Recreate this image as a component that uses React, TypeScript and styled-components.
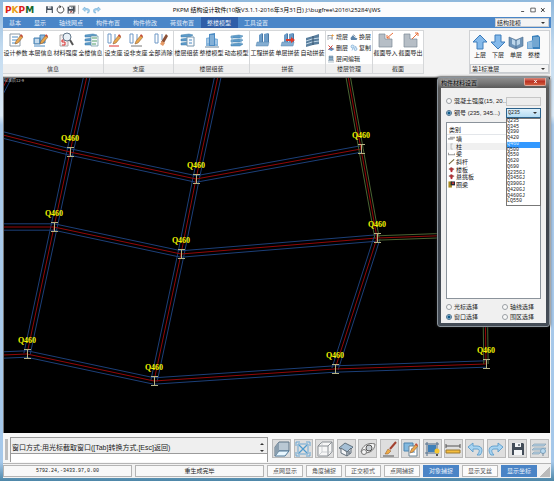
import React, { useState } from "react";
import styled, { createGlobalStyle, css } from "styled-components";

const sans = `"Liberation Sans", "Noto Sans CJK SC", sans-serif`;
const cjk = `"Noto Sans CJK SC", sans-serif`;
const mono = `"Liberation Mono", "Noto Sans CJK SC", monospace`;

const GlobalStyle = createGlobalStyle`
  * { box-sizing: border-box; }
  body { margin: 0; font: 6px/8px ${cjk}; color: #222; }
  button, input, select { font: inherit; color: inherit; margin: 0; padding: 0; }
  ul { list-style: none; margin: 0; padding: 0; }
`;

const Frame = styled.div`
  position: relative;
  display: flex;
  flex-direction: column;
  min-height: 100vh;
  padding: 2px 3px 3px;
  background: linear-gradient(180deg, #8fb8dc 0, #c3dbf0 10%, #dceaf6 24%, #a9c9ea 26%, #a5c8ea 96%, #4d87a8 100%);
`;
const Shell = styled.div`
  flex: 1;
  display: flex;
  flex-direction: column;
  background: #f3f3f3;
`;

/* Title bar */
const TitleBar = styled.header`
  display: flex;
  align-items: center;
  height: 15px;
  padding: 0 3px 0 2px;
  background: #fcfcfd;
`;
const Logo = styled.span`
  font: bold 9px/12px "DejaVu Sans", sans-serif;
  color: #dd2218;
  & > i { font-style: normal; color: #e9a21b; }
  & > b { color: #13652c; }
`;
const QuickTools = styled.div`
  display: flex;
  gap: 2px;
  margin-left: 11px;
`;
const QuickSep = styled.span`
  width: 1px;
  background: #bbb;
`;
const PlainButton = styled.button`
  display: flex;
  align-items: center;
  justify-content: center;
  border: 0;
  background: none;
`;
const QuickButton = styled(PlainButton)`
  width: 9px;
  height: 9px;
`;
const Title = styled.h1`
  flex: 1;
  margin: 0;
  padding-right: 66px;
  text-align: center;
  font: 6px/10px "Open Sans", "Noto Sans CJK SC", sans-serif;
  color: #000;
  white-space: nowrap;
`;
const WindowButton = styled(PlainButton)`
  width: 10px;
  height: 10px;
`;

/* Menu */
const MenuBar = styled.nav`
  display: flex;
  height: 11px;
  background: #4a86c8;
`;
const MenuTab = styled.button<{ $active?: boolean }>`
  padding: 0 7px 0 6px;
  border: 0;
  line-height: 11px;
  color: #e4eefa;
  background: ${(p) => (p.$active ? "#2f5ea8" : "transparent")};
`;
const SelectWrap = styled.div`
  position: relative;
  display: flex;
  &::after {
    content: "";
    position: absolute;
    right: 4px;
    top: calc(50% - 1px);
    border: 2px solid transparent;
    border-top-color: #333;
    border-bottom: 0;
    pointer-events: none;
  }
`;
const Select = styled.select`
  appearance: none;
  width: 100%;
  height: 9px;
  padding-left: 1px;
  border: 1px solid #c8ccd0;
  border-radius: 0;
  background: #f4f4f4;
  line-height: 7px;
`;
const ModuleSelect = styled(SelectWrap)`
  width: 54px;
  margin: 1px 2px 0 auto;
`;

/* Ribbon */
const Ribbon = styled.div`
  display: flex;
  height: 49px;
  padding: 2px 1px 2px 0;
  border-bottom: 1px solid #c9c9c9;
`;
const RibbonGroup = styled.section`
  display: flex;
  flex-direction: column;
  border: 1px solid #d5d7d9;
  border-left: 0;
  background: #fff;
`;
const GroupBody = styled.div`
  flex: 1;
  display: flex;
`;
const GroupGrid = styled.div`
  flex: 1;
  display: grid;
  grid-template-columns: 23px 23px;
  align-content: start;
`;
const GroupName = styled.h2`
  margin: 0;
  font: 6px/9px ${cjk};
  text-align: center;
  background: #efefef;
  color: #333;
`;
const Tool = styled.button<{ $narrow?: boolean }>`
  display: flex;
  flex-direction: column;
  align-items: center;
  gap: 1px;
  width: ${(p) => (p.$narrow ? 19 : 25)}px;
  padding: 1px 0 0;
  border: 0;
  background: none;
  white-space: nowrap;
`;
const SmallTool = styled.button<{ $wide?: boolean }>`
  display: flex;
  align-items: center;
  gap: 1px;
  height: 11px;
  padding-left: 1px;
  border: 0;
  background: none;
  white-space: nowrap;
  ${(p) => p.$wide && css`grid-column: span 2;`}
`;
const FloorPanel = styled.section`
  display: flex;
  flex-direction: column;
  justify-content: space-between;
  width: 81px;
  margin-left: auto;
  border: 1px solid #cfd1d4;
  background: #fafafa;
`;
const FloorTools = styled.div`
  display: flex;
  padding: 2px 4px 0 1px;
  & > button { width: 18px; }
`;

/* Drawing */
const Viewport = styled.main`
  flex: 1;
  display: flex;
  margin-right: 1px;
  border-top: 1px solid #777;
  border-left: 1px solid #777;
  background: #000;
`;
const Drawing = styled.svg`
  flex: 1;
  display: block;
  width: 100%;
`;
const NodeLabel = styled.text`
  font: bold 8px "Liberation Serif", serif;
  fill: #f4f400;
  text-anchor: middle;
`;
const ViewCaption = styled.text`
  font: 4px ${cjk};
  fill: #c8c8c8;
`;

/* Bottom */
const CommandRow = styled.section`
  display: flex;
  height: 31px;
  padding: 4px 2px 1px;
  border-bottom: 1px solid #b5b5b5;
  background: #f7f7f7;
`;
const Grip = styled.span`
  width: 3px;
  margin: 2px 2px 2px 0;
  background: #bcbcbc;
`;
const CommandBox = styled.div`
  flex: 259;
  display: flex;
  flex-direction: column;
  border: 1px solid #9b9b9b;
  background: #efefef;
`;
const CommandLog = styled.div`
  flex: 1;
  display: flex;
  align-items: center;
  justify-content: space-between;
  padding: 4px 3px 0 1px;
  font: 7px/9px ${sans};
  white-space: nowrap;
`;
const CommandInput = styled.input`
  height: 9px;
  border: 0;
  border-top: 1px solid #9b9b9b;
  background: #fff;
`;
const Scroller = styled.span`
  display: flex;
  flex-direction: column;
  gap: 5px;
`;
const ViewTools = styled.div`
  flex: 280;
  display: flex;
  justify-content: space-between;
  align-items: flex-start;
  padding: 2px 0 0 4px;
`;
const ViewButton = styled.button`
  display: flex;
  align-items: center;
  justify-content: center;
  width: 19px;
  height: 19px;
  border: 1px solid #b9b9b9;
  background: #dedede;
`;
const StatusBar = styled.footer`
  display: flex;
  gap: 3px;
  height: 14px;
  padding: 1px 1px 1px 0;
  background: #f2f2f2;
`;
const StatusCell = styled.output<{ $code?: boolean }>`
  flex: 1;
  border: 1px solid #b4b4b4;
  background: #f8f8f8;
  text-align: center;
  line-height: 10px;
  ${(p) => p.$code && css`font: 5px/10px ${mono};`}
`;
const StatusToggle = styled.button<{ $on?: boolean }>`
  width: 36px;
  border: 1px solid ${(p) => (p.$on ? "#4a84c6" : "#b9b9b9")};
  background: ${(p) => (p.$on ? "#4a84c6" : "#fbfbfb")};
  color: ${(p) => (p.$on ? "#e8f1fb" : "#555")};
  line-height: 10px;
`;
const ResizeGrip = styled.span`
  align-self: flex-end;
  width: 10px;
  height: 10px;
  background: linear-gradient(135deg, transparent 50%, #bbb 50%);
`;

/* Dialog */
const Dialog = styled.section`
  position: absolute;
  top: 77px;
  right: 4px;
  width: 113px;
  height: 250px;
  display: flex;
  flex-direction: column;
  padding: 0 3px 3px;
  border: 1px solid #8a939b;
  border-radius: 3px;
  background: linear-gradient(180deg, #8d8d8d 0, #777 5px, #5a5a5a 10px, #3e444c 60%, #454d57 100%);
  box-shadow: 0 0 3px #222;
`;
const DialogHead = styled.header`
  display: flex;
  justify-content: space-between;
  align-items: flex-start;
  height: 10px;
`;
const DialogTitle = styled.h2`
  margin: 0;
  font: 6px/10px ${cjk};
  color: #000;
  text-shadow: 0 0 3px #ddd, 0 0 3px #bbb;
`;
const CloseButton = styled(PlainButton)`
  width: 22px;
  height: 8px;
  border: 1px solid #e3a79b;
  border-top: 0;
  border-radius: 0 0 2px 2px;
  background: linear-gradient(#d78a7c, #bd3324 50%, #cf5b3b);
`;
const DialogBody = styled.form`
  flex: 1;
  display: flex;
  flex-direction: column;
  padding: 7px 5px 0;
  background: #f0f0f0;
`;
const FieldRow = styled.div`
  display: grid;
  grid-template-columns: 1fr 35px;
  align-items: center;
  height: 12px;
`;
const RadioLabel = styled.label`
  display: flex;
  align-items: center;
  gap: 2px;
  white-space: nowrap;
  font: 6px/8px ${sans};
`;
const Radio = styled.input`
  appearance: none;
  flex: none;
  width: 6px;
  height: 6px;
  border: 1px solid #9a9fa4;
  border-radius: 50%;
  background: #f8f8f8;
  &:checked {
    border-color: #4a6f8c;
    background: radial-gradient(circle, #0e5a8a 45%, #cfe6f5 65%);
  }
`;
const StrengthInput = styled.input`
  width: 35px;
  height: 9px;
  border: 1px solid #c6c6c6;
  background: #ededed;
`;
const GradePicker = styled.div`
  position: relative;
  height: 10px;
`;
const GradeSelect = styled(Select)`
  height: 10px;
  border-color: #2c628b;
  background: linear-gradient(#dff1fb, #b4dcf3);
  font: 5px/8px ${mono};
`;
const GradeList = styled.ul`
  position: absolute;
  z-index: 1;
  top: 10px;
  left: 0;
  right: 0;
  height: 88px;
  display: grid;
  grid-auto-rows: 1fr;
  border: 1px solid #777;
  background: #fff;
  font: 5px/5px ${mono};
`;
const Grade = styled.li<{ $selected?: boolean }>`
  color: ${(p) => (p.$selected ? "#d9edff" : "#222")};
  background: ${(p) => (p.$selected ? "#3399ff" : "transparent")};
`;
const CategoryTable = styled.div`
  flex: 1;
  margin-top: 3px;
  border: 1px solid #8b939b;
  background: #fff;
`;
const CategoryHead = styled.div`
  height: 12px;
  padding-left: 2px;
  line-height: 13px;
  border-bottom: 1px solid #e3e6ea;
`;
const CategoryList = styled.ul`
  display: grid;
  grid-auto-rows: 1fr;
  height: 53px;
  line-height: 7px;
`;
const Category = styled.li<{ $selected?: boolean }>`
  display: flex;
  align-items: center;
  gap: 1px;
  padding-left: 1px;
  background: ${(p) => (p.$selected ? "#f0f0f0" : "transparent")};
`;
const PickModes = styled.div`
  display: grid;
  grid-template-columns: 56px 1fr;
  grid-auto-rows: 10px;
  padding: 3px 0 1px;
`;

/* Icons */
type IconName = keyof typeof shapes;
const blue = "#4d8cc4";
const pencil = (
  <>
    <path d="M7 12l1-3 5-6 2 2-5 6z" fill="#e9a64d" stroke="#80532b" strokeWidth=".5" />
    <path d="M12 4l1-2 2 2-1 1z" fill="#c34c3c" />
  </>
);
const tower = (
  <>
    <path d="M2 6l4-1v9H2zM10 6l4 1v7h-4z" fill="#87b5dc" />
    <path d="M5 2l6-1v13H5z" fill={blue} />
    <path d="M6 4h4M6 6h4M6 8h4M6 10h4M6 12h4M3 8h2M3 10h2M11 9h2M11 11h2" stroke="#d3e6f5" strokeWidth=".8" />
    <path d="M1 15h14" stroke="#6d879d" />
  </>
);
const slabs = (
  <path d="M2 3l8-1 4 1-3 2H2zM2 7l8-1 4 1-3 2H2zM2 11l8-1 4 1-3 2H2z" fill="#5e9bca" stroke="#397aa8" strokeWidth=".5" />
);
const block = (
  <>
    <path d="M4 10V3l3-2v9zM9 10V2l4-1v9z" fill="#6b9bc7" />
    <path d="M7 1l1 1v8H7zM13 1l1 1v8h-1z" fill="#4776a3" />
    <path d="M2 10h12l-1 4H1z" fill="#84add1" stroke="#5786ae" strokeWidth=".5" />
  </>
);
const frameShape = <path d="M2 2v9M5 2v9M2 2h3M9 2v6M2 11h3" stroke="#6f98c6" fill="none" />;
const section = <path d="M1 2h6v5h7v8H1z" fill="#b6bec6" stroke="#7d8a97" strokeWidth=".7" />;
const floppy = (
  <>
    <path d="M2 2h11l1 1v11H2z" fill="#424c58" />
    <path d="M5 2h6v4H5zM4 9h8v5H4z" fill="#f3f5f7" />
    <path d="M9 3v2" stroke="#424c58" strokeWidth="1.3" />
  </>
);
const shapes = {
  params: (<><path d="M2 2h10v12H2z" fill="#fff" stroke="#8c9aa6" /><path d="M4 5h6M4 8h6M4 11h5" stroke={blue} />{pencil}</>),
  floorInfo: (<><path d="M1 6h6v6H1zM7 3h5v8H7z" fill="#8db8dc" stroke="#4a82b1" /><path d="M2 8h4M2 10h4" stroke="#fff" />{pencil}<path d="M1 14h11" stroke={blue} /></>),
  strength: (<><path d="M2 3h8v11H2z" fill="#f7eeee" stroke="#aaa" /><path d="M7 8H4v2h3v3H4" stroke="#d93030" fill="none" /><circle cx="9" cy="5" r="4" fill="#e8f0f6" stroke="#65798b" /><path d="M12 8l3 5" stroke="#555" strokeWidth="2" /></>),
  allInfo: (<>{slabs}<path d="M8 4h7v10H8z" fill="#f4f8fb" stroke="#64929e" strokeWidth=".7" /><path d="M9 6h5M9 9h5M9 12h4" stroke="#58a36b" /></>),
  support: (<>{frameShape}{pencil}<path d="M3 14h10" stroke="#d33" /></>),
  noSupport: (<>{frameShape}{pencil}<path d="M3 14h11" stroke="#777" /></>),
  clear: (<>{frameShape}<path d="M8 10l5-8 2 2-4 7z" fill="#8a4f35" /><path d="M7 12l2-3 3 2-2 3z" fill="#e59a66" /></>),
  assemble: (<>{slabs}<path d="M8 5h7v9H8z" fill="#f9fafc" stroke="#7796ae" /><path d="M10 8h3M10 11h3" stroke={blue} /></>),
  tower,
  slabs: (<><g transform="translate(0 1)">{slabs}</g><path d="M3 4v9M12 4v7" stroke="#84b2d5" /></>),
  block,
  blockArrow: (<>{block}<path d="M6 7h5V5l4 3-4 3V9H6z" fill="#df3a2c" /></>),
  autoBlock: (<><path d="M1 6l7-2 6-2v10l-6 1-7 2z" fill="#5a7f9e" /><path d="M1 9l6-2 7-1M1 12l6-2 7-1" stroke="#c2d7e7" fill="none" /><path d="M8 4v9" stroke="#35536c" /></>),
  addFloor: (<><path d="M2 4v10M2 5h8M10 4v10M4 10h8" stroke="#74818c" strokeWidth="1.3" /><path d="M11 2l1 2 3 1-3 1-1 2-1-2-2-1 2-1z" fill="#ef9b35" /></>),
  swap: (<><path d="M1 10l5-6 4 5 5 2-2 3H2z" fill="#5b83a8" /><path d="M7 3l4 4" stroke="#345" /></>),
  remove: (<><path d="M2 11l6-5 7 4-6 4z" fill="#5c97cb" /><path d="M3 3l8 8M11 3l-8 8" stroke="#dc4335" strokeWidth="2" /></>),
  copy: (<><circle cx="5" cy="5" r="3" fill="#d4e8f6" stroke={blue} /><circle cx="11" cy="10" r="3" fill="#d4e8f6" stroke={blue} /><path d="M6 8l-2 5M9 4l4 2" stroke={blue} /></>),
  between: (<><path d="M4 2h8v8H4z" fill="#8daec9" stroke="#5f7e97" /><path d="M4 5h8M2 11h12M2 14h12" stroke="#5f7e97" /></>),
  sectionIn: (<>{section}<path d="M15 1L9 6M9 3v3h3" stroke="#e8703b" fill="none" /></>),
  sectionOut: (<>{section}<path d="M9 7l6-6M12 1h3v3" stroke="#e8703b" fill="none" /></>),
  up: <path d="M8 1l7 7h-4v7H5V8H1z" fill="#84b9ea" stroke="#3d7cbb" />,
  down: <path d="M8 15l7-7h-4V1H5v7H1z" fill="#84b9ea" stroke="#3d7cbb" />,
  floor: (<><path d="M1 3l7 3 7-3v9l-7 3-7-3z" fill="#6d93b8" stroke="#4b6b8c" strokeWidth=".6" /><path d="M4 5l4 2 4-2v5l-4 2-4-2z" fill="#bdd6ea" /><path d="M8 6v8" stroke="#456b90" /></>),
  building: (<><path d="M6 2l6-1 2 2v12H6z" fill="#3b81bc" /><path d="M1 8l6-2v9H1z" fill="#73a8d5" /><path d="M7 4h6M7 6h6M7 8h6M7 10h6M7 12h6M2 9h4M2 11h4M2 13h4" stroke="#c8e0f2" strokeWidth=".8" /></>),
  save: floppy,
  refresh: (<><path d="M5 3a6 6 0 1 0 6 0" fill="none" stroke="#3a3a3a" strokeWidth="1.6" /><path d="M6 0l4 3-4 3z" fill="#3a3a3a" /></>),
  saveAll: (<><path d="M4 1h11v11H4z" fill="#777" /><g transform="translate(-1 1)">{floppy}</g><path d="M5 10l5 4M10 10l-5 4" stroke="#9b3c34" strokeWidth="1.4" /></>),
  undo: <path d="M1 6l5-4v3h4c6 0 6 6 3 9h-3c3-3 3-6 0-6H6v3z" fill="#a8d4f1" stroke="#5c9dcc" strokeWidth=".9" />,
  redo: <path d="M15 6l-5-4v3H6c-6 0-6 6-3 9h3c-3-3-3-6 0-6h4v3z" fill="#a8d4f1" stroke="#5c9dcc" strokeWidth=".9" />,
  minimize: <path d="M3 12h8" stroke="#222" strokeWidth="2" />,
  maximize: <path d="M2 3h12v10H2z" stroke="#222" strokeWidth="1.8" fill="none" />,
  close: <path d="M3 3l9 10M12 3L3 13" stroke="#222" strokeWidth="2.5" />,
  closeWhite: <path d="M4 3l8 10M12 3L4 13" stroke="#fff" strokeWidth="3" />,
  topView: (<><path d="M5 1h10v9H5L1 15V6z" fill="#b9c8d4" stroke="#5f7486" /><path d="M5 10h10l-4 5H1z" fill="#e8f7ff" stroke="#4f7796" /><path d="M5 1v9l-4 5V6z" fill="#8a9eae" /></>),
  zoomAll: (<><path d="M4 4l8 8M12 4l-8 8" stroke="#4e9bcf" strokeWidth="1.2" /><path d="M1 5V1h4M11 1h4v4M15 11v4h-4M5 15H1v-4M3 3h10v10H3z" stroke="#6aa7d3" fill="none" /></>),
  cube: (<><path d="M5 1h10v10l-4 4H1V5z" fill="#f7f7f7" stroke="#8a8f94" /><path d="M1 5h10v10M11 5l4-4" stroke="#8a8f94" /><path d="M5 1v10h10M5 11l-4 4" stroke="#bbc0c4" strokeWidth=".7" /></>),
  house: (<><path d="M1 7l6-5 8 4-5 5z" fill="#a5bfd5" stroke="#62727f" /><path d="M3 7l6 4v4l-6-3z" fill="#f4f5f7" stroke="#64717d" /><path d="M9 11l4-4v5l-4 3z" fill="#cfd6dc" stroke="#64717d" /><path d="M11 10v3" stroke="#456" /></>),
  eye: (<><path d="M1 11C2 5 8 1 15 3c0 6-6 11-14 8z" fill="#f5f5f5" stroke="#777" /><circle cx="9" cy="7" r="3" fill="#c8cdd1" stroke="#555" /><circle cx="4" cy="11" r="2.5" fill="#f5f5f5" stroke="#777" /></>),
  brush: (<><path d="M15 1L9 8" stroke="#a2402f" strokeWidth="2" /><path d="M7 8l3 2-3 3H4z" fill="#f0ac45" stroke="#8b542a" strokeWidth=".5" /><path d="M2 15h11" stroke="#555" /></>),
  pages: (<><path d="M1 2h9v8H1z" fill="#83b9df" stroke="#4c85b0" /><path d="M6 5h8v10H6z" fill="#fff" stroke="#6f8594" /><path d="M8 8h4M8 11h4" stroke={blue} />{pencil}</>),
  beamLamp: (<><path d="M1 3h14M1 12h14M3 1v14M13 1v9" stroke="#536f8a" /><path d="M4 4h8v7H4z" fill="#3f80b8" /><circle cx="13" cy="10" r="2.5" fill="#f8c62e" /><path d="M12 14h2" stroke="#555" strokeWidth="2" /></>),
  measure: (<><path d="M1 5h14M1 3v4M15 3v4" stroke="#555" /><path d="M1 9h14v3H1z" fill="#f4bd3e" stroke="#9b782e" /></>),
  layers: (<><path d="M3 3h12l-2 2H1zM3 7h12l-2 2H1zM3 11h7l-2 2H1z" fill="#b5cfe2" stroke="#7897ad" strokeWidth=".6" /><circle cx="12" cy="10" r="2.5" fill="#b9d9ef" stroke="#7da4bf" /><path d="M12 12v3" stroke="#789" /></>),
  wall: <path d="M0 7h4V4h12v4h-4v3H0z" fill="#aaa" />,
  column: <path d="M6 2h5M7 2v12h4" stroke="#aaa" fill="none" strokeWidth="1.5" />,
  beam: <path d="M1 6v5h14V8" stroke="#999" fill="none" strokeWidth="2.5" />,
  brace: <path d="M2 14L14 3" stroke="#756a3a" strokeWidth="2.6" />,
  plate: (<><path d="M1 7l6-4 8 4-7 5z" fill="#9c5a56" /><path d="M6 4h4v10H6z" fill="#b92b32" /></>),
  ring: (<><path d="M1 1h8v14H1z" fill="#a8891e" /><path d="M6 1h10v9H6z" fill="#202a3a" /><path d="M9 3h5v4H9z" fill="#c73a3a" /></>),
};
const Svg = styled.svg`
  display: block;
  flex: none;
  fill: none;
`;
const Icon = ({ name, size = 16 }: { name: IconName; size?: number }) => (
  <Svg width={size} height={size} viewBox="0 0 16 16" aria-hidden="true">{shapes[name]}</Svg>
);
const Chevron = ({ up }: { up?: boolean }) => (
  <Svg width="4" height="3" viewBox="0 0 4 3"><path d={up ? "M0 3l2-2 2 2z" : "M0 0h4L2 2z"} fill="#333" /></Svg>
);

/* Data */
const menus = ["基本", "显示", "轴线网点", "构件布置", "构件修改", "荷载布置", "整楼模型", "工具设置"];
type ToolDef = [string, IconName];
const leftGroups: { name: string; tools: ToolDef[] }[] = [
  { name: "信息", tools: [["设计参数", "params"], ["本层信息", "floorInfo"], ["材料强度", "strength"], ["全楼信息", "allInfo"]] },
  { name: "支座", tools: [["设支座", "support"], ["设非支座", "noSupport"], ["全部清除", "clear"]] },
  { name: "楼层组装", tools: [["楼层组装", "assemble"], ["整楼模型", "tower"], ["动态模型", "slabs"]] },
  { name: "拼装", tools: [["工程拼装", "block"], ["单层拼装", "blockArrow"], ["自动拼装", "autoBlock"]] },
];
const sectionTools: ToolDef[] = [["截面导入", "sectionIn"], ["截面导出", "sectionOut"]];
const manageTools: ToolDef[] = [["增层", "addFloor"], ["换层", "swap"], ["删层", "remove"], ["复制", "copy"], ["层间编辑", "between"]];
const floorTools: ToolDef[] = [["上层", "up"], ["下层", "down"], ["单层", "floor"], ["整楼", "building"]];
const viewTools: ToolDef[] = [
  ["俯视", "topView"], ["全图", "zoomAll"], ["轴测", "cube"], ["三维", "house"], ["视点", "eye"], ["清理", "brush"], ["编辑", "pages"],
  ["构件", "beamLamp"], ["测量", "measure"], ["撤销", "undo"], ["重做", "redo"], ["保存", "save"], ["图层", "layers"],
];
const grades = ["Q235", "Q345", "Q390", "Q420", "Q460", "Q500", "Q550", "Q620", "Q690", "Q235GJ", "Q345GJ", "Q390GJ", "Q420GJ", "Q460GJ", "LQ550"];
const categories: ToolDef[] = [["墙", "wall"], ["柱", "column"], ["梁", "beam"], ["斜杆", "brace"], ["楼板", "plate"], ["悬挑板", "plate"], ["圈梁", "ring"]];
const pickModes = ["光标选择", "轴线选择", "窗口选择", "围区选择"];
const toggles = ["点网显示", "角度捕捉", "正交模式", "点网捕捉", "对象捕捉", "显示叉丝", "显示坐标"];

type Pt = [number, number];
const nodes: Pt[] = [[66, 74], [192, 101], [357, 71], [50, 149], [177, 176], [373, 160], [23, 276], [150, 303], [331, 291], [482, 286]];
const [a, b, c, d, e, f, g, h, i, j] = nodes;
const steelBeams: [Pt, Pt][] = [
  [[83, -2], a], [a, d], [d, g], [[214, -2], b], [b, e], [e, h], [[-1, 57], a], [a, b], [b, c],
  [[-1, 149], d], [d, e], [e, f], [f, i], [[-1, 277], g], [g, h], [h, i], [i, j], [[5, -2], [-6, 19]],
];
const edgeBeams: [Pt, Pt][] = [[[344, -2], c], [c, f], [f, [483, 156]], [[480, 150], j]];

const Beam = ({ from, to, color }: { from: Pt; to: Pt; color: string }) => {
  const dx = to[0] - from[0];
  const dy = to[1] - from[1];
  const len = Math.hypot(dx, dy);
  const off = color === "#4b6433" ? 2.2 : 3.2;
  const nx = (-dy / len) * off;
  const ny = (dx / len) * off;
  return (
    <g strokeWidth="1">
      <path d={`M${from[0]} ${from[1]}L${to[0]} ${to[1]}`} stroke="#930808" />
      {[1, -1].map((s) => (
        <path key={s} d={`M${from[0] + nx * s} ${from[1] + ny * s}L${to[0] + nx * s} ${to[1] + ny * s}`} stroke={color} />
      ))}
    </g>
  );
};

const ToolButton = ({ tool: [label, icon] }: { tool: ToolDef }) => (
  <Tool type="button" $narrow={label.length === 3}>
    <Icon name={icon} />
    {label}
  </Tool>
);

export default function App() {
  const [mode, setMode] = useState("窗口选择");
  const [material, setMaterial] = useState("steel");
  const [menu, setMenu] = useState("整楼模型");
  return (
    <>
      <GlobalStyle />
      <Frame>
        <Shell>
          <TitleBar>
            <Logo>P<i>K</i>P<b>M</b></Logo>
            <QuickTools>
              <QuickButton aria-label="保存"><Icon name="save" size={9} /></QuickButton>
              <QuickButton aria-label="刷新"><Icon name="refresh" size={9} /></QuickButton>
              <QuickButton aria-label="全部保存"><Icon name="saveAll" size={9} /></QuickButton>
              <QuickSep />
              <QuickButton aria-label="撤销"><Icon name="undo" size={8} /></QuickButton>
              <QuickButton aria-label="重做"><Icon name="redo" size={8} /></QuickButton>
            </QuickTools>
            <Title>PKPM 结构设计软件(10版V3.1.1-2016年3月31日) J:\bugfree\2016\25284\JWS</Title>
            <WindowButton aria-label="最小化"><Icon name="minimize" size={6} /></WindowButton>
            <WindowButton aria-label="最大化"><Icon name="maximize" size={6} /></WindowButton>
            <WindowButton aria-label="关闭"><Icon name="close" size={6} /></WindowButton>
          </TitleBar>
          <MenuBar>
            {menus.map((m) => (
              <MenuTab key={m} type="button" $active={m === menu} onClick={() => setMenu(m)}>{m}</MenuTab>
            ))}
            <ModuleSelect>
              <Select aria-label="模块"><option>结构建模</option></Select>
            </ModuleSelect>
          </MenuBar>
          <Ribbon>
            {leftGroups.map((group) => (
              <RibbonGroup key={group.name}>
                <GroupBody>{group.tools.map((t) => <ToolButton key={t[0]} tool={t} />)}</GroupBody>
                <GroupName>{group.name}</GroupName>
              </RibbonGroup>
            ))}
            <RibbonGroup>
              <GroupGrid>
                {manageTools.map(([label, icon]) => (
                  <SmallTool key={label} type="button" $wide={label.length > 2}>
                    <Icon name={icon} size={8} />
                    {label}
                  </SmallTool>
                ))}
              </GroupGrid>
              <GroupName>楼层管理</GroupName>
            </RibbonGroup>
            <RibbonGroup>
              <GroupBody>{sectionTools.map((t) => <ToolButton key={t[0]} tool={t} />)}</GroupBody>
              <GroupName>截面</GroupName>
            </RibbonGroup>
            <FloorPanel>
              <FloorTools>{floorTools.map((t) => <ToolButton key={t[0]} tool={t} />)}</FloorTools>
              <SelectWrap>
                <Select aria-label="标准层"><option>第1标准层</option></Select>
              </SelectWrap>
            </FloorPanel>
          </Ribbon>
          <Viewport>
            <Drawing role="img" aria-label="结构平面">
              {steelBeams.map(([p, q], n) => <Beam key={n} from={p} to={q} color="#1c3f78" />)}
              {edgeBeams.map(([p, q], n) => <Beam key={n} from={p} to={q} color="#4b6433" />)}
              {nodes.map(([x, y]) => (
                <g key={`${x}-${y}`}>
                  <path d={`M${x - 3} ${y - 4.5}h7M${x - 3} ${y + 4.5}h7M${x + 0.5} ${y - 4}v8`} stroke="#b5b183" />
                  <NodeLabel x={x} y={y - 11}>Q460</NodeLabel>
                </g>
              ))}
              <ViewCaption x="0" y="4">标准层12-9</ViewCaption>
            </Drawing>
          </Viewport>
          <CommandRow>
            <Grip />
            <CommandBox>
              <CommandLog>
                <span>窗口方式:用光标截取窗口([Tab]转换方式,[Esc]返回)</span>
                <Scroller><Chevron up /><Chevron /></Scroller>
              </CommandLog>
              <CommandInput aria-label="命令" />
            </CommandBox>
            <ViewTools>
              {viewTools.map(([label, icon]) => (
                <ViewButton key={label} type="button" aria-label={label}><Icon name={icon} /></ViewButton>
              ))}
            </ViewTools>
          </CommandRow>
          <StatusBar>
            <StatusCell $code>5792.24,-3433.97,0.00</StatusCell>
            <StatusCell>重生成完毕</StatusCell>
            {toggles.map((t) => (
              <StatusToggle key={t} type="button" $on={t === "对象捕捉" || t === "显示坐标"}>{t}</StatusToggle>
            ))}
            <ResizeGrip />
          </StatusBar>
        </Shell>
        <Dialog role="dialog" aria-label="构件材料设置">
          <DialogHead>
            <DialogTitle>构件材料设置</DialogTitle>
            <CloseButton type="button" aria-label="关闭"><Icon name="closeWhite" size={5} /></CloseButton>
          </DialogHead>
          <DialogBody>
            <FieldRow>
              <RadioLabel>
                <Radio type="radio" name="material" checked={material === "concrete"} onChange={() => setMaterial("concrete")} />
                混凝土强度(15, 20..
              </RadioLabel>
              <StrengthInput aria-label="混凝土强度" disabled />
            </FieldRow>
            <FieldRow>
              <RadioLabel>
                <Radio type="radio" name="material" checked={material === "steel"} onChange={() => setMaterial("steel")} />
                钢号 (235, 345...)
              </RadioLabel>
              <GradePicker>
                <SelectWrap>
                  <GradeSelect aria-label="钢号">{grades.map((x) => <option key={x}>{x}</option>)}</GradeSelect>
                </SelectWrap>
                <GradeList>
                  {grades.map((x) => <Grade key={x} $selected={x === "Q460"}>{x}</Grade>)}
                </GradeList>
              </GradePicker>
            </FieldRow>
            <CategoryTable>
              <CategoryHead>类别</CategoryHead>
              <CategoryList>
                {categories.map(([label, icon]) => (
                  <Category key={label} $selected={label === "柱"}>
                    <Icon name={icon} size={7} />
                    {label}
                  </Category>
                ))}
              </CategoryList>
            </CategoryTable>
            <PickModes>
              {pickModes.map((m) => (
                <RadioLabel key={m}>
                  <Radio type="radio" name="pick" checked={m === mode} onChange={() => setMode(m)} />
                  {m}
                </RadioLabel>
              ))}
            </PickModes>
          </DialogBody>
        </Dialog>
      </Frame>
    </>
  );
}
